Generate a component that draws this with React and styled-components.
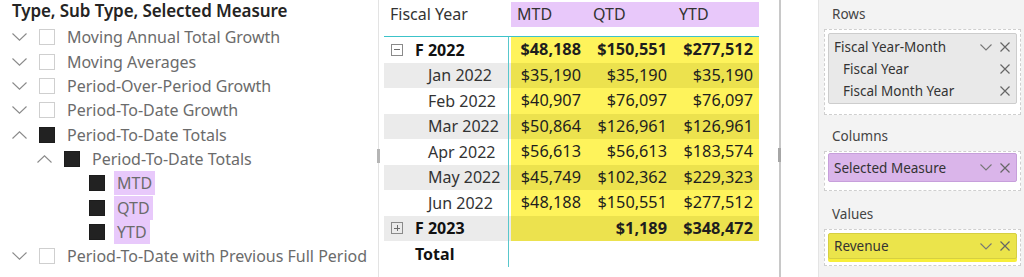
import React from "react";
import styled, { createGlobalStyle } from "styled-components";

const GlobalStyle = createGlobalStyle`
  html, body { margin: 0; padding: 0; background: #fff; }
  body { font-family: "Noto Sans", "Open Sans", sans-serif; color: #252423; }
  * { box-sizing: border-box; }
`;

const Page = styled.div`
  display: flex;
  width: 1024px;
  height: 277px;
  overflow: hidden;
  background: #fff;
`;

/* ---------- Slicer ---------- */
const Slicer = styled.section`
  position: relative;
  width: 379px;
  flex: none;
  border-right: 1px solid #e3e3e3;
  padding: 0 0 0 12px;
`;

const ScrollThumb = styled.div`
  position: absolute;
  right: -2px;
  top: ${(p) => p.$top}px;
  width: 3px;
  height: 14px;
  background: #b5b5b5;
`;

const SlicerTitle = styled.h2`
  margin: 0 0 3px;
  font-size: 17px;
  font-weight: 600;
  line-height: 22px;
  color: #252423;
  letter-spacing: -0.1px;
`;

const TreeRow = styled.div`
  display: flex;
  align-items: center;
  height: 24.35px;
  padding-left: ${(p) => p.$level * 25}px;
`;

const ChevronSlot = styled.span`
  width: 27px;
  flex: none;
  display: flex;
  align-items: center;
`;

const Check = styled.span`
  width: 16px;
  height: 16px;
  flex: none;
  border: 1px solid ${(p) => (p.$on ? "#1c1c1c" : "#cfcfcf")};
  background: ${(p) => (p.$on ? "#222" : "#fff")};
  margin-right: 12px;
`;

const TreeLabel = styled.span`
  font-size: 16px;
  color: #6b6b6b;
  white-space: nowrap;
  line-height: 24px;
  padding: 0 3px;
  margin-left: -3px;
  background: ${(p) => (p.$hl ? "#e8c9fb" : "transparent")};
`;

const Chevron = ({ up }) => (
  <svg width="15" height="8" viewBox="0 0 15 8">
    <polyline
      points={up ? "0.5,7.5 7.5,0.8 14.5,7.5" : "0.5,0.5 7.5,7.2 14.5,0.5"}
      fill="none"
      stroke="#8a8a8a"
      strokeWidth="1.1"
    />
  </svg>
);

/* ---------- Matrix ---------- */
const MatrixArea = styled.section`
  width: 400px;
  flex: none;
  padding: 2px 20px 0 5px;
`;

const HeaderRow = styled.div`
  display: flex;
  height: 35px;
  border-bottom: 1.5px solid #3cc3c9;
`;

const HeaderLabel = styled.div`
  width: 127px;
  flex: none;
  font-size: 16px;
  color: #333;
  padding: 0 0 0 6px;
  line-height: 25px;
`;

const HeaderBand = styled.div`
  display: flex;
  height: 25px;
  flex: 1;
  background: #e8c8fa;
`;

const ColHead = styled.div`
  width: ${(p) => p.$w}px;
  font-size: 16px;
  color: #333;
  padding-left: 6px;
  line-height: 25px;
`;

const Row = styled.div`
  display: flex;
  height: 25.5px;
  background: ${(p) => (p.$alt ? "#ebebeb" : "#fff")};
`;

const RowHead = styled.div`
  width: 125px;
  flex: none;
  display: flex;
  align-items: center;
  padding-left: ${(p) => (p.$indent ? 44 : 7)}px;
  border-right: 1px solid #59c7cc;
  margin-right: 2px;
  font-size: 16px;
  font-weight: ${(p) => (p.$bold ? 700 : 400)};
  color: ${(p) => (p.$bold ? "#111" : "#333")};
  white-space: nowrap;
`;

const Values = styled.div`
  display: flex;
  flex: 1;
  background: ${(p) => (p.$none ? "transparent" : p.$alt ? "#ece24e" : "#fef35b")};
`;

const Cell = styled.div`
  width: ${(p) => p.$w}px;
  text-align: right;
  padding-right: 6px;
  font-size: 16.3px;
  line-height: 25.5px;
  font-weight: ${(p) => (p.$bold ? 700 : 400)};
  color: #1e1e1e;
  white-space: nowrap;
`;

const ToggleBox = styled.span`
  width: 12px;
  height: 12px;
  border: 1px solid #8a8a8a;
  margin-right: 12px;
  flex: none;
  position: relative;
  visibility: ${(p) => (p.$hidden ? "hidden" : "visible")};
  &::before {
    content: "";
    position: absolute;
    left: 2px;
    right: 2px;
    top: 4.5px;
    height: 1px;
    background: #6b6b6b;
  }
  &::after {
    content: "";
    display: ${(p) => (p.$plus ? "block" : "none")};
    position: absolute;
    top: 2px;
    bottom: 2px;
    left: 4.5px;
    width: 1px;
    background: #6b6b6b;
  }
`;

/* ---------- Splitter ---------- */
const Splitter = styled.div`
  position: relative;
  width: 2px;
  flex: none;
  background: #c8c8c8;
`;

const SplitHandle = styled.div`
  position: absolute;
  left: -1px;
  top: 148px;
  width: 3px;
  height: 14px;
  background: #a6a6a6;
`;

const Gap = styled.div`
  width: 37px;
  flex: none;
`;

/* ---------- Field wells ---------- */
const Wells = styled.aside`
  flex: 1;
  background: #f3f3f3;
  border-left: 1px solid #e4e4e4;
  padding: 4px 3px 0 5px;
  display: flex;
  flex-direction: column;
`;

const WellTitle = styled.div`
  font-size: 13.5px;
  color: #444;
  padding-left: 8px;
  line-height: 20px;
  margin-bottom: 5px;
  margin-top: ${(p) => p.$mt || 0}px;
`;

const DropZone = styled.div`
  border: 1px dashed #cfcfcf;
  background: #fff;
  padding: ${(p) => p.$pt ?? 3}px 3px ${(p) => p.$pb}px 3px;
`;

const Pill = styled.div`
  border: 1px solid ${(p) => p.$border};
  background: ${(p) => p.$bg};
  border-radius: 2px;
  padding: ${(p) => p.$pad};
  box-shadow: ${(p) => (p.$under ? `0 3px 0 ${p.$under}` : "none")};
`;

const PillLine = styled.div`
  display: flex;
  align-items: center;
  height: ${(p) => p.$h}px;
  padding-left: ${(p) => (p.$sub ? 14 : 5)}px;
  padding-right: 6px;
  font-size: 13.5px;
  color: #333;
`;

const PillText = styled.span`
  flex: 1;
  white-space: nowrap;
`;

const IconBtn = styled.span`
  display: inline-flex;
  margin-left: ${(p) => p.$ml || 0}px;
`;

const Down = () => (
  <svg width="12" height="7" viewBox="0 0 12 7">
    <polyline points="0.5,0.5 6,6 11.5,0.5" fill="none" stroke="#777" strokeWidth="1.1" />
  </svg>
);

const Close = () => (
  <svg width="10" height="10" viewBox="0 0 10 10">
    <path d="M0.5 0.5 L9.5 9.5 M9.5 0.5 L0.5 9.5" stroke="#666" strokeWidth="1.2" />
  </svg>
);

const tree = [
  { level: 0, chev: "down", on: false, label: "Moving Annual Total Growth" },
  { level: 0, chev: "down", on: false, label: "Moving Averages" },
  { level: 0, chev: "down", on: false, label: "Period-Over-Period Growth" },
  { level: 0, chev: "down", on: false, label: "Period-To-Date Growth" },
  { level: 0, chev: "up", on: true, label: "Period-To-Date Totals" },
  { level: 1, chev: "up", on: true, label: "Period-To-Date Totals" },
  { level: 2, chev: null, on: true, label: "MTD", hl: true },
  { level: 2, chev: null, on: true, label: "QTD", hl: true },
  { level: 2, chev: null, on: true, label: "YTD", hl: true },
  { level: 0, chev: "down", on: false, label: "Period-To-Date with Previous Full Period" },
];

const cols = [
  { name: "MTD", w: 76 },
  { name: "QTD", w: 86 },
  { name: "YTD", w: 86 },
];

const rows = [
  { label: "F 2022", bold: true, toggle: "minus", v: ["$48,188", "$150,551", "$277,512"] },
  { label: "Jan 2022", v: ["$35,190", "$35,190", "$35,190"] },
  { label: "Feb 2022", v: ["$40,907", "$76,097", "$76,097"] },
  { label: "Mar 2022", v: ["$50,864", "$126,961", "$126,961"] },
  { label: "Apr 2022", v: ["$56,613", "$56,613", "$183,574"] },
  { label: "May 2022", v: ["$45,749", "$102,362", "$229,323"] },
  { label: "Jun 2022", v: ["$48,188", "$150,551", "$277,512"] },
  { label: "F 2023", bold: true, toggle: "plus", v: ["", "$1,189", "$348,472"] },
  { label: "Total", bold: true, total: true, v: ["", "", ""] },
];

export default function App() {
  return (
    <>
      <GlobalStyle />
      <Page>
        <Slicer>
          <SlicerTitle>Type, Sub Type, Selected Measure</SlicerTitle>
          {tree.map((t, i) => (
            <TreeRow key={i} $level={t.level}>
              <ChevronSlot>{t.chev && <Chevron up={t.chev === "up"} />}</ChevronSlot>
              <Check $on={t.on} />
              <TreeLabel $hl={t.hl}>{t.label}</TreeLabel>
            </TreeRow>
          ))}
          <ScrollThumb $top={149} />
        </Slicer>

        <MatrixArea>
          <HeaderRow>
            <HeaderLabel>Fiscal Year</HeaderLabel>
            <HeaderBand>
              {cols.map((c) => (
                <ColHead key={c.name} $w={c.w}>
                  {c.name}
                </ColHead>
              ))}
            </HeaderBand>
          </HeaderRow>
          {rows.map((r, i) => {
            const alt = i % 2 === 1;
            return (
              <Row key={r.label} $alt={alt}>
                <RowHead $bold={r.bold} $indent={!r.bold}>
                  {(r.toggle || r.total) && (
                    <ToggleBox $plus={r.toggle === "plus"} $hidden={r.total} />
                  )}
                  {r.label}
                </RowHead>
                <Values $alt={alt} $none={r.total}>
                  {r.v.map((val, j) => (
                    <Cell key={j} $w={cols[j].w} $bold={r.bold}>
                      {val}
                    </Cell>
                  ))}
                </Values>
              </Row>
            );
          })}
        </MatrixArea>

        <Splitter>
          <SplitHandle />
        </Splitter>
        <Gap />

        <Wells>
          <WellTitle>Rows</WellTitle>
          <DropZone $pb={10}>
            <Pill $bg="#e9e9e9" $border="#cdcdcd" $pad="2px 0 1px">
              <PillLine $h={22}>
                <PillText>Fiscal Year-Month</PillText>
                <IconBtn><Down /></IconBtn>
                <IconBtn $ml={8}><Close /></IconBtn>
              </PillLine>
              <PillLine $h={22} $sub>
                <PillText>Fiscal Year</PillText>
                <IconBtn><Close /></IconBtn>
              </PillLine>
              <PillLine $h={22} $sub>
                <PillText>Fiscal Month Year</PillText>
                <IconBtn><Close /></IconBtn>
              </PillLine>
            </Pill>
          </DropZone>

          <WellTitle $mt={11}>Columns</WellTitle>
          <DropZone $pt={1} $pb={8}>
            <Pill $bg="#dab5ea" $border="#c79fdb" $pad="0">
              <PillLine $h={27}>
                <PillText>Selected Measure</PillText>
                <IconBtn><Down /></IconBtn>
                <IconBtn $ml={8}><Close /></IconBtn>
              </PillLine>
            </Pill>
          </DropZone>

          <WellTitle $mt={13}>Values</WellTitle>
          <DropZone $pb={6}>
            <Pill $bg="#ebe44b" $border="#d6cf42" $pad="0" $under="#f7ee3a">
              <PillLine $h={24}>
                <PillText>Revenue</PillText>
                <IconBtn><Down /></IconBtn>
                <IconBtn $ml={8}><Close /></IconBtn>
              </PillLine>
            </Pill>
          </DropZone>
        </Wells>
      </Page>
    </>
  );
}
